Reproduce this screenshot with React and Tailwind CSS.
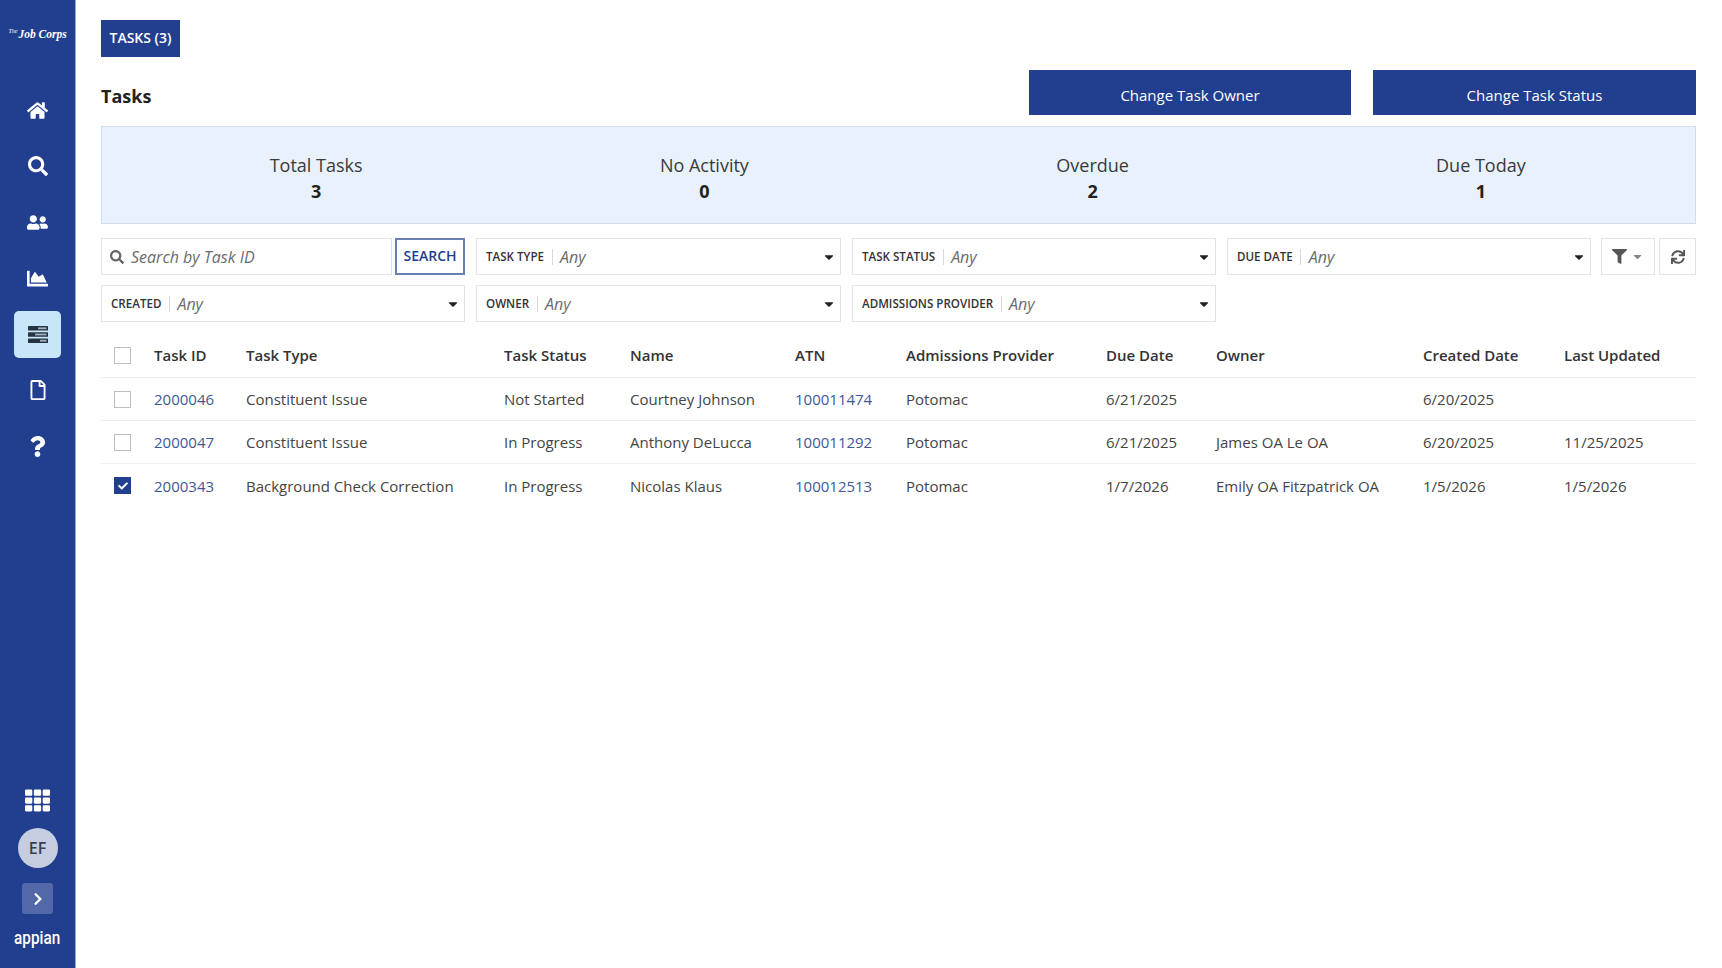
import { FaHome, FaSearch, FaUserFriends, FaChartArea, FaRegFile, FaQuestion, FaTh, FaFilter, FaSync, FaChevronRight, FaCheck, FaCaretDown } from 'react-icons/fa';

const stats = [
  ['Total Tasks', '3'],
  ['No Activity', '0'],
  ['Overdue', '2'],
  ['Due Today', '1'],
];

const rows = [
  { id: '2000046', type: 'Constituent Issue', status: 'Not Started', name: 'Courtney Johnson', atn: '100011474', provider: 'Potomac', due: '6/21/2025', owner: '', created: '6/20/2025', updated: '', checked: false },
  { id: '2000047', type: 'Constituent Issue', status: 'In Progress', name: 'Anthony DeLucca', atn: '100011292', provider: 'Potomac', due: '6/21/2025', owner: 'James OA Le OA', created: '6/20/2025', updated: '11/25/2025', checked: false },
  { id: '2000343', type: 'Background Check Correction', status: 'In Progress', name: 'Nicolas Klaus', atn: '100012513', provider: 'Potomac', due: '1/7/2026', owner: 'Emily OA Fitzpatrick OA', created: '1/5/2026', updated: '1/5/2026', checked: true },
];

const gridCols = 'grid grid-cols-[53px_92px_258px_126px_165px_111px_200px_110px_207px_141px_1fr] items-center';

function ServerIcon() {
  return (
    <svg width="20" height="17" viewBox="0 0 20 17">
      <rect x="0" y="0" width="20" height="4.6" rx="0.6" fill="#26323f" />
      <rect x="0" y="6.2" width="20" height="4.6" rx="0.6" fill="#26323f" />
      <rect x="0" y="12.4" width="20" height="4.6" rx="0.6" fill="#26323f" />
      <rect x="10" y="1.4" width="8.5" height="1.8" fill="#9fb2c4" />
      <rect x="7" y="7.6" width="11.5" height="1.8" fill="#9fb2c4" />
      <rect x="12" y="13.8" width="6.5" height="1.8" fill="#9fb2c4" />
    </svg>
  );
}

function Sidebar() {
  const iconClass = 'h-14 w-full flex items-center justify-center text-white text-[19px]';
  return (
    <aside className="w-[76px] h-[968px] shrink-0 bg-[#223e8f] border-r border-[#8fb0e6] flex flex-col items-center">
      <div className="h-[82px] w-full flex items-start justify-center pt-[26px] text-white font-['Liberation_Serif',serif] italic font-bold text-[11.5px] leading-[16px]">
        <span className="text-[6px] font-normal mr-px self-start leading-[10px]">The</span>Job Corps
      </div>
      <div className={iconClass}><FaHome className="text-[21px]" /></div>
      <div className={iconClass}><FaSearch className="text-[20px]" /></div>
      <div className={iconClass}><FaUserFriends className="text-[21px]" /></div>
      <div className={iconClass}><FaChartArea className="text-[21px]" /></div>
      <div className="w-[47px] h-[47px] rounded-[5px] bg-[#c8e6fa] flex items-center justify-center my-[4.5px]"><ServerIcon /></div>
      <div className={iconClass}><FaRegFile className="text-[20px]" /></div>
      <div className={iconClass}><FaQuestion className="text-[21px]" /></div>
      <div className="mt-auto flex flex-col items-center pb-[19px]">
        <FaTh className="text-white text-[25px]" />
        <div className="mt-[15px] w-10 h-10 rounded-full bg-[#c5cde0] text-[#3b3f4a] flex items-center justify-center text-[16px] font-semibold">EF</div>
        <div className="mt-[15px] w-[31px] h-[31px] rounded-[3px] bg-[#5268a8] flex items-center justify-center text-white"><FaChevronRight className="text-[14px]" /></div>
        <div className="mt-[13px] text-white font-['Roboto',sans-serif] font-medium text-[18px] leading-[22px] scale-x-85">appian</div>
      </div>
    </aside>
  );
}

function FilterBox({ label, className }) {
  return (
    <div className={'h-[37px] bg-white border border-[#e4e4e4] flex items-center pl-[9px] pr-[4px] ' + className}>
      <span className="text-[11.6px] font-semibold uppercase text-[#333] leading-none">{label}</span>
      <span className="w-px h-[16px] bg-[#d8d8d8] mx-[7.5px]" />
      <span className="italic text-[16px] text-[#6b6b6b]">Any</span>
      <FaCaretDown className="ml-auto text-[14px] text-[#222]" />
    </div>
  );
}

function Checkbox({ checked }) {
  if (checked) {
    return (
      <div className="w-[17px] h-[17px] bg-[#223e8f] flex items-center justify-center text-white ml-[13px]">
        <FaCheck className="text-[10px]" />
      </div>
    );
  }
  return <div className="w-[17px] h-[17px] bg-white border border-[#bdbdbd] ml-[13px]" />;
}

export default function App() {
  return (
    <div className="flex w-[1722px] h-[968px] overflow-hidden bg-white font-['Open_Sans',sans-serif] text-[#333]">
      <Sidebar />
      <main className="w-[1646px] pl-[25px] pr-[26px] pt-[20px]">
        <div className="h-[37px] w-[79px] bg-[#223e8f] text-white text-[14px] font-semibold flex items-center justify-center pb-[2px]">TASKS (3)</div>

        <div className="flex items-center justify-between mt-[13px] h-[45px]">
          <h1 className="text-[18px] font-bold text-[#222] pt-[7px]">Tasks</h1>
          <div className="flex gap-[22px]">
            <button className="w-[322px] h-[45px] bg-[#223e8f] text-white text-[15px] pt-[6px]">Change Task Owner</button>
            <button className="w-[323px] h-[45px] bg-[#223e8f] text-white text-[15px] pt-[6px]">Change Task Status</button>
          </div>
        </div>

        <div className="mt-[11px] h-[98px] bg-[#e9f2fc] border border-[#d3dde8] px-[20px] pt-[6px] grid grid-cols-4 items-center">
          {stats.map(([label, value]) => (
            <div key={label} className="text-center text-[18px] leading-[26px]">
              <div className="text-[#3a3a3a]">{label}</div>
              <div className="font-bold text-[#222]">{value}</div>
            </div>
          ))}
        </div>

        <div className="mt-[14px] flex">
          <div className="w-[291px] h-[37px] bg-white border border-[#e4e4e4] flex items-center pl-[8px] gap-[7px]">
            <FaSearch className="text-[14px] text-[#666]" />
            <span className="italic text-[16px] text-[#6b6b6b]">Search by Task ID</span>
          </div>
          <button className="ml-[3px] w-[70px] h-[37px] border-2 border-[#6a7fb2] text-[#223e8f] text-[14px] font-semibold pb-[2px]">SEARCH</button>
          <FilterBox label="Task Type" className="ml-[11px] w-[365px]" />
          <FilterBox label="Task Status" className="ml-[11px] w-[364px]" />
          <FilterBox label="Due Date" className="ml-[11px] w-[364px]" />
          <div className="ml-[10px] w-[54px] h-[37px] border border-[#e4e4e4] flex items-center justify-center gap-[4px] text-[#555]">
            <FaFilter className="text-[15px]" />
            <FaCaretDown className="text-[13px] text-[#888]" />
          </div>
          <div className="ml-[4px] w-[37px] h-[37px] border border-[#e4e4e4] flex items-center justify-center text-[#555]">
            <FaSync className="text-[14px]" />
          </div>
        </div>

        <div className="mt-[10px] flex gap-[11px]">
          <FilterBox label="Created" className="w-[364px]" />
          <FilterBox label="Owner" className="w-[365px]" />
          <FilterBox label="Admissions Provider" className="w-[364px]" />
        </div>

        <div className={gridCols + ' mt-[11px] h-[45px] border-b border-[#eeeeee] text-[15px] font-semibold text-[#333]'}>
          <Checkbox />
          <div>Task ID</div>
          <div>Task Type</div>
          <div>Task Status</div>
          <div>Name</div>
          <div>ATN</div>
          <div>Admissions Provider</div>
          <div>Due Date</div>
          <div>Owner</div>
          <div>Created Date</div>
          <div>Last Updated</div>
        </div>

        {rows.map((row) => (
          <div key={row.id} className={gridCols + ' h-[43.2px] border-b border-[#eeeeee] last:border-b-0 text-[15px] text-[#444]'}>
            <Checkbox checked={row.checked} />
            <a className="text-[#3f5895]">{row.id}</a>
            <div>{row.type}</div>
            <div>{row.status}</div>
            <div>{row.name}</div>
            <a className="text-[#3f5895]">{row.atn}</a>
            <div>{row.provider}</div>
            <div>{row.due}</div>
            <div>{row.owner}</div>
            <div>{row.created}</div>
            <div>{row.updated}</div>
          </div>
        ))}
      </main>
    </div>
  );
}
